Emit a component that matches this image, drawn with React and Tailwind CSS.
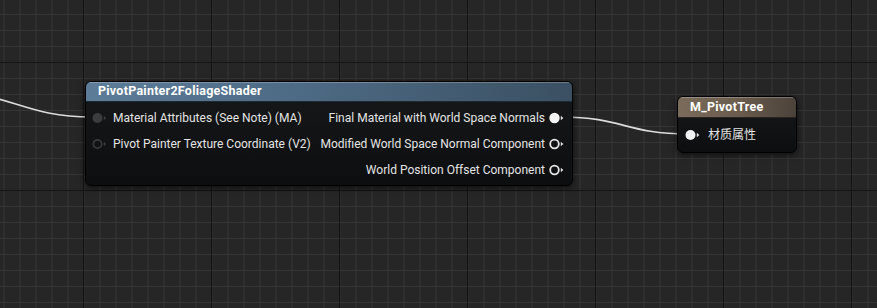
import React from "react";

const InPin = ({ filled, white }) => (
  <svg width="16" height="12" viewBox="0 0 16 12" className="shrink-0">
    {filled ? (
      <circle cx="5.5" cy="6" r="5" fill={white ? "#f2f2f2" : "#3c3c3c"} />
    ) : (
      <circle cx="5.5" cy="6" r="4.2" fill="none" stroke={white ? "#e8e8e8" : "#3a3a3a"} strokeWidth="1.7" />
    )}
    <path d="M11.8 3.8 L14.3 6 L11.8 8.2 Z" fill={white ? "#e8e8e8" : "#3a3a3a"} />
  </svg>
);

const OutPin = ({ filled }) => (
  <svg width="16" height="12" viewBox="0 0 16 12" className="shrink-0">
    {filled ? (
      <circle cx="5.5" cy="6" r="5.2" fill="#f4f4f4" />
    ) : (
      <circle cx="5.5" cy="6" r="4.3" fill="none" stroke="#e6e6e6" strokeWidth="1.8" />
    )}
    <path d="M11.8 3.8 L14.3 6 L11.8 8.2 Z" fill="#e6e6e6" />
  </svg>
);

const inputs = [
  { label: "Material Attributes (See Note) (MA)", filled: true },
  { label: "Pivot Painter Texture Coordinate (V2)", filled: false },
];

const outputs = [
  { label: "Final Material with World Space Normals", filled: true },
  { label: "Modified World Space Normal Component", filled: false },
  { label: "World Position Offset Component", filled: false },
];

export default function App() {
  return (
    <div
      className="relative w-[877px] h-[308px] overflow-hidden bg-[#262626] text-[12px] text-[#e4e4e4]"
      style={{ fontFamily: "Roboto, 'Noto Sans CJK SC', sans-serif" }}
    >
      <svg className="absolute inset-0" width="877" height="308">
        <defs>
          <pattern id="minor" x="3.5" y="14" width="16" height="16" patternUnits="userSpaceOnUse">
            <path d="M0 0.5 H16 M0.5 0 V16" stroke="#353535" strokeWidth="1" fill="none" />
          </pattern>
          <pattern id="major" x="83" y="62" width="128" height="128" patternUnits="userSpaceOnUse">
            <path d="M0 0.5 H128 M0.5 0 V128" stroke="#141414" strokeWidth="1.2" fill="none" />
          </pattern>
        </defs>
        <rect width="877" height="308" fill="url(#minor)" />
        <rect width="877" height="308" fill="url(#major)" />
        <path d="M-70 90 C 10 90, 20 117, 92 117" stroke="#dcdcdc" strokeWidth="1.6" fill="none" />
        <path d="M562 117 C 622 117, 626 134, 688 134" stroke="#dcdcdc" strokeWidth="1.6" fill="none" />
      </svg>

      {/* PivotPainter2FoliageShader node */}
      <div className="absolute left-[85px] top-[81px] w-[488px] rounded-[6px] border border-black bg-[linear-gradient(to_bottom,#161819,#0d0e0f)] shadow-[0_2px_6px_rgba(0,0,0,0.6)] overflow-hidden">
        <div className="h-[20px] flex items-center pl-[12px] bg-[linear-gradient(90deg,#5d7c98_0%,#4d6a84_45%,#3b5062_100%)] border-b border-[#1e2a33] shadow-[inset_0_1px_0_rgba(255,255,255,0.25)]">
          <span className="font-bold text-white text-[12.5px] tracking-[0.25px]">PivotPainter2FoliageShader</span>
        </div>
        <div className="flex justify-between pt-[3px] pb-[2px]">
          <div className="flex flex-col pl-[6px]">
            {inputs.map((p) => (
              <div key={p.label} className="h-[26px] flex items-center gap-[5px]">
                <InPin filled={p.filled} />
                <span>{p.label}</span>
              </div>
            ))}
          </div>
          <div className="flex flex-col items-end pr-[7px]">
            {outputs.map((p) => (
              <div key={p.label} className="h-[26px] flex items-center gap-[4px]">
                <span>{p.label}</span>
                <OutPin filled={p.filled} />
              </div>
            ))}
          </div>
        </div>
      </div>

      {/* M_PivotTree node */}
      <div className="absolute left-[677px] top-[96px] w-[120px] rounded-[6px] border border-black bg-[linear-gradient(to_bottom,#161819,#0d0e0f)] shadow-[0_2px_6px_rgba(0,0,0,0.6)] overflow-hidden">
        <div className="h-[21px] flex items-center pl-[12px] bg-[linear-gradient(90deg,#7a6b5a_0%,#6b5d4e_50%,#4b423a_100%)] border-b border-[#2a241e] shadow-[inset_0_1px_0_rgba(255,255,255,0.25)]">
          <span className="font-bold text-white text-[12.5px] tracking-[0.25px]">M_PivotTree</span>
        </div>
        <div className="h-[34px] flex items-center pl-[7px] gap-[7px]">
          <InPin filled white />
          <span>材质属性</span>
        </div>
      </div>
    </div>
  );
}
